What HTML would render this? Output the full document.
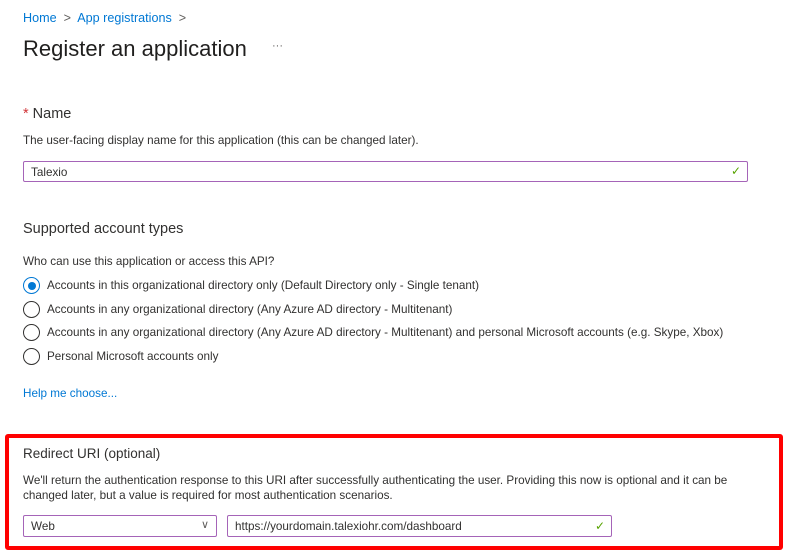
<!DOCTYPE html>
<html><head><meta charset="utf-8"><style>
body{margin:0;width:788px;height:555px;background:#fff;font-family:"Liberation Sans",sans-serif;color:#323130;position:relative;overflow:hidden}
.a{position:absolute;white-space:nowrap}
.s{font-size:11.7px}
.in{position:absolute;border:1px solid #a564b8;border-radius:2px;box-sizing:border-box;background:#fff}
.r{position:absolute;left:23px;width:17px;height:17px;border:1px solid #323130;border-radius:50%;box-sizing:border-box}
.rt{position:absolute;left:47px;font-size:11.7px}
</style></head><body>
<div class="a" style="left:23px;top:11px;font-size:12.6px;color:#0078d4">Home <span style="color:#605e5c">&nbsp;&gt;&nbsp;</span> App registrations <span style="color:#605e5c">&nbsp;&gt;</span></div>
<div class="a" style="left:23px;top:36px;font-size:22px;color:#201f1e">Register an application</div>
<div class="a" style="left:272px;top:40px;font-size:11px;color:#605e5c">···</div>
<div class="a" style="left:23px;top:106px;font-size:14.5px"><span style="color:#d13438">*</span> Name</div>
<div class="a s" style="left:23px;top:134px">The user-facing display name for this application (this can be changed later).</div>
<div class="in" style="left:23px;top:161px;width:725px;height:21px"><span class="a s" style="left:7px;top:4px">Talexio</span><span class="a" style="right:6px;top:2px;color:#57a300;font-size:12px">✓</span></div>
<div class="a" style="left:23px;top:221px;font-size:14.5px">Supported account types</div>
<div class="a s" style="left:23px;top:255px">Who can use this application or access this API?</div>
<div class="r" style="top:277px;border-color:#0078d4"><div style="position:absolute;left:3.5px;top:3.5px;width:8px;height:8px;border-radius:50%;background:#0078d4"></div></div>
<div class="rt" style="top:279px">Accounts in this organizational directory only (Default Directory only - Single tenant)</div>
<div class="r" style="top:301px"></div>
<div class="rt" style="top:303px">Accounts in any organizational directory (Any Azure AD directory - Multitenant)</div>
<div class="r" style="top:324px"></div>
<div class="rt" style="top:326px">Accounts in any organizational directory (Any Azure AD directory - Multitenant) and personal Microsoft accounts (e.g. Skype, Xbox)</div>
<div class="r" style="top:348px"></div>
<div class="rt" style="top:350px">Personal Microsoft accounts only</div>
<div class="a s" style="left:23px;top:387px;color:#0078d4">Help me choose...</div>
<div style="position:absolute;left:5px;top:434px;width:778px;height:116px;border:4px solid #f00;box-sizing:border-box;border-radius:3px"></div>
<div class="a" style="left:23px;top:446px;font-size:13.5px">Redirect URI (optional)</div>
<div class="a s" style="left:23px;top:473px;line-height:15px">We'll return the authentication response to this URI after successfully authenticating the user. Providing this now is optional and it can be<br>changed later, but a value is required for most authentication scenarios.</div>
<div class="in" style="left:23px;top:515px;width:194px;height:22px"><span class="a s" style="left:7px;top:4px">Web</span><span class="a" style="right:7px;top:2px;font-size:11px;color:#605e5c">&#x2228;</span></div>
<div class="in" style="left:227px;top:515px;width:385px;height:22px"><span class="a s" style="left:7px;top:4px">https://yourdomain.talexiohr.com/dashboard</span><span class="a" style="right:6px;top:3px;color:#57a300;font-size:12px">✓</span></div>
</body></html>
